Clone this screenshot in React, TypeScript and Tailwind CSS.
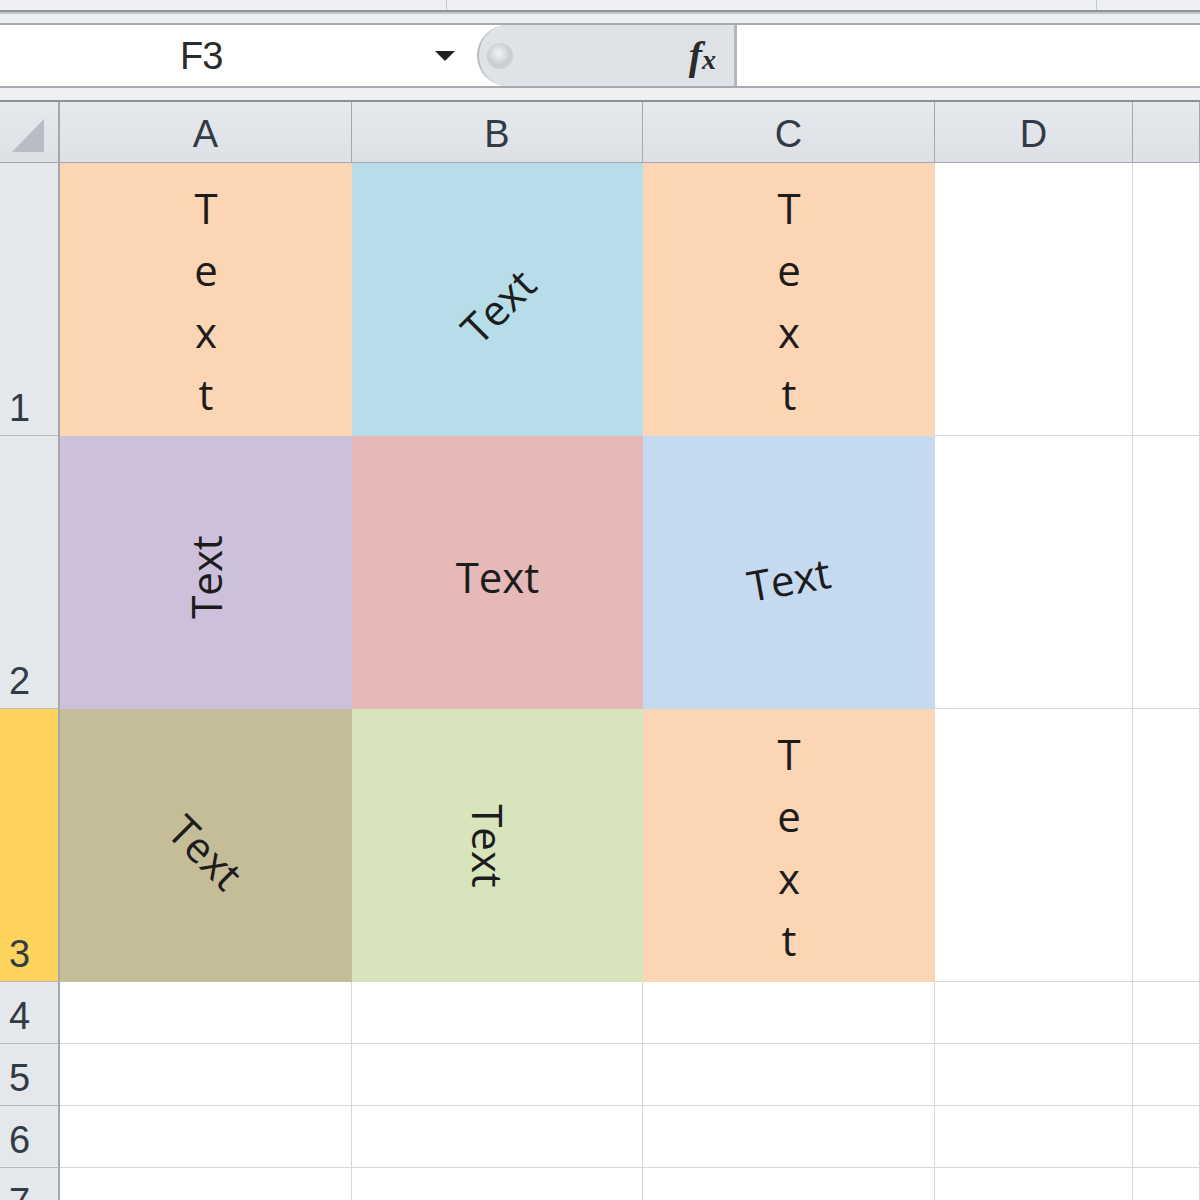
import type { ReactNode } from 'react';

type Cell = { bg: string; content?: ReactNode };
type Row = { n: number; h: string; head: string; cells: Cell[] };

const cols = [
    { label: 'A', w: 'w-[292px]' },
    { label: 'B', w: 'w-[291px]' },
    { label: 'C', w: 'w-[292px]' },
    { label: 'D', w: 'w-[198px]' },
    { label: '', w: 'flex-1' },
];

// Letters stacked one per line (Excel "vertical text")
function Stacked() {
    return (
        <div className="flex flex-col items-center text-[42px] leading-[62px] pt-[2px]">
            {['T', 'e', 'x', 't'].map((c, i) => (
                <span key={i}>{c}</span>
            ))}
        </div>
    );
}

function Rot({ cls }: { cls: string }) {
    return <span className={'inline-block text-[42px] leading-none ' + cls}>Text</span>;
}

const white: Cell = { bg: 'bg-white border-r border-b border-[#d6d6d6]' };

const rows: Row[] = [
    {
        n: 1,
        h: 'h-[273px]',
        head: 'bg-[#e4e7eb]',
        cells: [
            { bg: 'bg-[#fcd5b4]', content: <Stacked /> },
            { bg: 'bg-[#b7dde8]', content: <Rot cls="-rotate-45 translate-y-[6px]" /> },
            { bg: 'bg-[#fcd5b4]', content: <Stacked /> },
            white,
            white,
        ],
    },
    {
        n: 2,
        h: 'h-[273px]',
        head: 'bg-[#e4e7eb]',
        cells: [
            { bg: 'bg-[#ccc0da]', content: <Rot cls="-rotate-90 translate-y-[4px]" /> },
            { bg: 'bg-[#e6b8b7]', content: <Rot cls="translate-y-[4px]" /> },
            { bg: 'bg-[#c5d9f1]', content: <Rot cls="-rotate-[10deg] translate-y-[6px]" /> },
            white,
            white,
        ],
    },
    {
        n: 3,
        h: 'h-[273px]',
        head: 'bg-[#fdd35e]',
        cells: [
            { bg: 'bg-[#c4bd97]', content: <Rot cls="rotate-45 translate-y-[6px]" /> },
            { bg: 'bg-[#d8e4bc]', content: <Rot cls="rotate-90 -translate-x-[10px]" /> },
            { bg: 'bg-[#fcd5b4]', content: <Stacked /> },
            white,
            white,
        ],
    },
    { n: 4, h: 'h-[62px]', head: 'bg-[#e4e7eb]', cells: [white, white, white, white, white] },
    { n: 5, h: 'h-[62px]', head: 'bg-[#e4e7eb]', cells: [white, white, white, white, white] },
    { n: 6, h: 'h-[62px]', head: 'bg-[#e4e7eb]', cells: [white, white, white, white, white] },
    { n: 7, h: 'h-[62px]', head: 'bg-[#e4e7eb]', cells: [white, white, white, white, white] },
];

export default function App() {
    return (
        <div className="w-[1200px] h-[1200px] overflow-hidden bg-white text-[#1c1c1c] font-['Liberation_Sans',Arial,sans-serif]">
            {/* Ribbon bottom edge */}
            <div className="flex h-[10px] bg-[#eef0f3]">
                <div className="w-[447px] border-r border-[#c4c8cd]" />
                <div className="w-[650px] border-r border-[#c4c8cd]" />
                <div className="flex-1" />
            </div>
            <div className="h-[2px] bg-[#8e9297]" />
            <div className="h-[2px] bg-[#c3c6ca]" />
            <div className="h-[9px] bg-[#eceef1]" />
            <div className="h-[2px] bg-[#a6aab0]" />

            {/* Name box + formula bar */}
            <div className="flex h-[61px] bg-white">
                <div className="w-[477px] flex items-center">
                    <span className="ml-[180px] text-[38px] leading-none text-[#2b2b2b] tracking-[-1px]">F3</span>
                    <svg className="ml-[212px]" width="22" height="12" viewBox="0 0 22 12">
                        <path d="M1 1 L21 1 L11 11 Z" fill="#222" />
                    </svg>
                </div>
                <div className="w-[258px] flex items-center rounded-l-[31px] border-l-2 border-[#b8bcc1] bg-[#dfe2e6] border-r">
                    <div className="ml-[8px] w-[26px] h-[26px] rounded-full bg-[radial-gradient(circle_at_45%_40%,#f4f5f6_0%,#c9ccd0_55%,#d8dbdf_100%)]" />
                    <div className="flex-1" />
                    <span className="mr-[18px] font-['Liberation_Serif',serif] italic font-bold text-[40px] leading-none text-[#2a2a2a]">
                        f<span className="text-[28px]">x</span>
                    </span>
                </div>
                <div className="w-[2px] bg-[#b3b7bc]" />
                <div className="flex-1 bg-white" />
            </div>
            <div className="h-[2px] bg-[#a6aab0]" />
            <div className="h-[12px] bg-[#eef0f2]" />
            <div className="h-[2px] bg-[#8e9297]" />

            {/* Column headers */}
            <div className="flex h-[61px] bg-gradient-to-b from-[#e6e9ed] to-[#dde1e6] border-b border-[#a3a8ae]">
                <div className="w-[60px] flex items-end justify-end pr-[14px] pb-[10px] border-r-2 border-[#a3a8ae]">
                    <svg width="32" height="33" viewBox="0 0 32 33">
                        <path d="M0 33 L32 33 L32 0 Z" fill="#b9bdc3" />
                    </svg>
                </div>
                {cols.map((c, i) => (
                    <div
                        key={i}
                        className={c.w + ' flex items-center justify-center pt-[4px] text-[38px] leading-none text-[#333a44] border-r border-[#a3a8ae]'}
                    >
                        {c.label}
                    </div>
                ))}
            </div>

            {/* Rows */}
            {rows.map((r) => (
                <div key={r.n} className={'flex ' + r.h}>
                    <div
                        className={
                            r.head +
                            ' w-[60px] flex items-end pl-[9px] pb-[8px] text-[38px] leading-none text-[#333a44] border-r-2 border-b border-r-[#a3a8ae] border-b-[#b4b9c0]'
                        }
                    >
                        {r.n}
                    </div>
                    {r.cells.map((cell, i) => (
                        <div
                            key={i}
                            className={cols[i].w + ' ' + cell.bg + ' flex items-center justify-center font-["Open_Sans",sans-serif]'}
                        >
                            {cell.content}
                        </div>
                    ))}
                </div>
            ))}
        </div>
    );
}
